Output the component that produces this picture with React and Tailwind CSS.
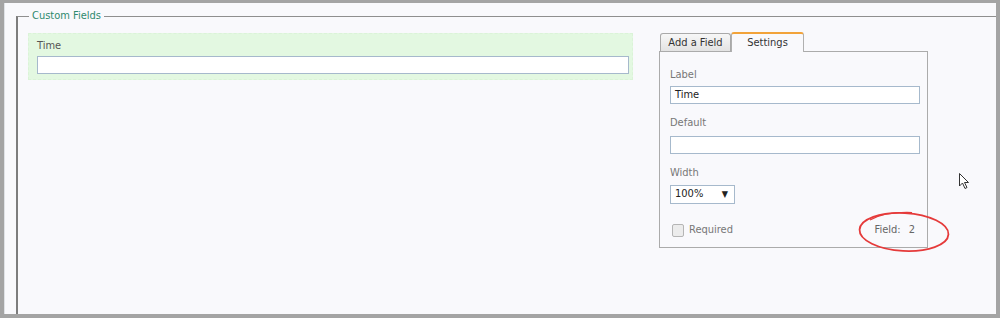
import React from "react";

const font = { fontFamily: '"DejaVu Sans Condensed", "DejaVu Sans", sans-serif' };

export default function App() {
  return (
    <div className="w-[1000px] h-[318px] overflow-hidden bg-[#a4a4a4] pt-[3px] pl-[4px] pr-[4px] pb-[4px]" style={font}>
      <div className="relative w-full h-full overflow-hidden bg-[#f9f9fc] border-l border-[#dfe2e6] pl-[11px] pt-[6px]">
        <fieldset className="w-[1000px] h-[400px] border border-[#8f8f8f] border-l-2 border-l-[#7d7d7d] pl-[10px] pt-[9px] m-0">
          <legend className="ml-px px-[3px] text-[11px] leading-[14px] text-[#2f8a6e]">Custom Fields</legend>
          <div className="flex items-start">
            <div className="mt-px w-[605px] h-[47px] bg-[#e3f8e1] border border-dashed border-[#dbf3d8] pl-[8px] pr-[3px] pt-[5px]">
              <div className="text-[11px] leading-[14px] text-[#555]">Time</div>
              <div className="mt-[3px] h-[18px] w-full bg-white border border-[#a6b9cc]"></div>
            </div>
            <div className="relative ml-[26px] w-[269px]">
              <div className="flex items-end pl-px h-[19px]">
                <div className="w-[71px] h-[18px] border border-b-0 border-[#a9a9a9] rounded-t-[3px] bg-gradient-to-b from-[#f7f7f7] to-[#e3e3e3] text-[11px] leading-[17px] text-[#333] text-center">
                  Add a Field
                </div>
                <div className="relative z-10 w-[73px] h-[20px] -mb-px border border-b-0 border-t-2 border-[#b0b0b0] border-t-[#f2a33a] rounded-t-[3px] bg-[#f9f9fc] text-[11px] leading-[17px] text-[#333] text-center">
                  Settings
                </div>
              </div>
              <div className="relative h-[197px] border border-[#ababab] bg-[#f9f9fc] pl-[10px] pr-[7px] pt-[16px]">
                <div className="text-[11px] leading-[14px] text-[#777]">Label</div>
                <div className="mt-[4px] h-[18px] w-[250px] bg-white border border-[#a6b9cc] pl-[4px] text-[11px] leading-[16px] text-[#222]">Time</div>
                <div className="mt-[12px] text-[11px] leading-[14px] text-[#777]">Default</div>
                <div className="mt-[6px] h-[18px] w-[250px] bg-white border border-[#a6b9cc]"></div>
                <div className="mt-[12px] text-[11px] leading-[14px] text-[#777]">Width</div>
                <div className="mt-[5px] h-[19px] w-[65px] bg-white border border-[#a6b9cc] flex items-center justify-between pl-[4px] pr-[6px] text-[11px] text-[#222]">
                  <span>100%</span>
                  <span className="text-[9px]">▼</span>
                </div>
                <div className="mt-[19px] flex items-center justify-between pr-[5px]">
                  <div className="flex items-center">
                    <div className="ml-[2px] w-[12px] h-[13px] rounded-[2px] border border-[#b5b5b5] bg-[#ececec]"></div>
                    <span className="ml-[5px] text-[11px] leading-[14px] text-[#777]">Required</span>
                  </div>
                  <div className="text-[11px] leading-[14px] text-[#666]">
                    Field:<span className="ml-[8px]">2</span>
                  </div>
                </div>
                <svg className="absolute left-[196px] top-[157px]" width="96" height="46" viewBox="0 0 96 46">
                  <ellipse cx="48" cy="23" rx="44.5" ry="19" transform="rotate(3 48 23)" fill="none" stroke="#e53a3a" strokeWidth="1.8" />
                  <path d="M14 11 C 24 5, 40 3, 56 3.5" fill="none" stroke="#e53a3a" strokeWidth="1.2" />
                </svg>
              </div>
            </div>
          </div>
        </fieldset>
        <svg className="absolute left-[954px] top-[170px]" width="12" height="18" viewBox="0 0 12 18">
          <path d="M0.5 0.5 L0.5 13 L3.5 10 L6 15.5 L8 14.5 L5.5 9.5 L9.5 9.5 Z" fill="#ffffff" stroke="#333" strokeWidth="1" />
        </svg>
      </div>
    </div>
  );
}
